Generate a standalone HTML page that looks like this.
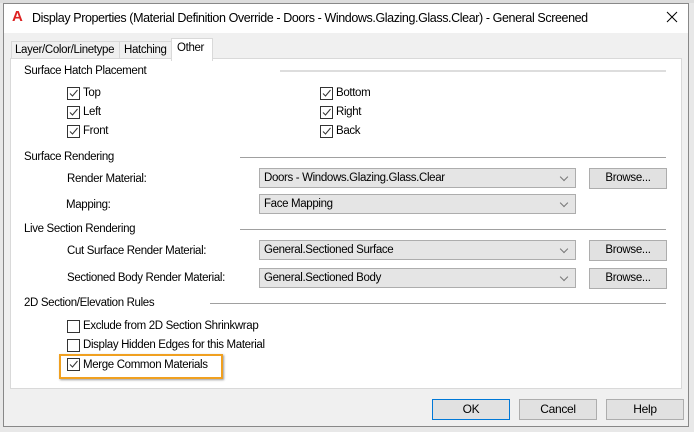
<!DOCTYPE html>
<html><head><style>
body{margin:0;width:694px;height:432px;overflow:hidden;background:#e8e8e8;font-family:"Liberation Sans",sans-serif;font-size:11.5px;color:#000;position:relative}
.a{position:absolute;white-space:nowrap}
.lbl{letter-spacing:-0.35px}
.cb{position:absolute;width:11px;height:11px;border:1px solid #333;background:#fff}
.cb svg{position:absolute;left:0;top:0}
.line{position:absolute;height:1px;background:#a0a0a0}
.combo{position:absolute;height:20px;width:317px;background:#e5e5e5;border:1px solid #adadad;box-sizing:border-box;padding:3px 0 0 4px;letter-spacing:-0.35px}
.combo:after{content:"";position:absolute;right:8px;top:5px;width:5px;height:5px;border-right:1px solid #777;border-bottom:1px solid #777;transform:rotate(45deg)}
.btn{position:absolute;height:21px;background:#e1e1e1;border:1px solid #adadad;box-sizing:border-box;text-align:center;line-height:19px;letter-spacing:-0.3px}
</style></head><body>
<div class="a" style="left:0;top:0;width:694px;height:3px;background:#ddd"></div>
<div class="a" style="left:3px;top:3px;width:686px;height:424px;background:#f0f0f0;border:1px solid #888;box-sizing:border-box"></div>
<div class="a" style="left:4px;top:4px;width:684px;height:29px;background:#fff"></div>
<div class="a" style="left:12px;top:8px;font-weight:bold;color:#d22;font-size:15px">A</div>
<div class="a" style="left:32px;top:11px;font-size:12.5px;letter-spacing:-0.4px">Display Properties (Material Definition Override - Doors - Windows.Glazing.Glass.Clear) - General Screened</div>
<svg class="a" style="left:666px;top:11px" width="12" height="12"><path d="M1 1L11 11M11 1L1 11" stroke="#000" stroke-width="1"/></svg>
<div class="a" style="left:11px;top:41px;width:108px;height:17px;border:1px solid #d9d9d9;border-bottom:none;background:#f0f0f0"></div>
<div class="a lbl" style="left:15px;top:44px">Layer/Color/Linetype</div>
<div class="a" style="left:119px;top:41px;width:52px;height:17px;border:1px solid #d9d9d9;border-bottom:none;background:#f0f0f0"></div>
<div class="a lbl" style="left:124px;top:44px">Hatching</div>
<div class="a" style="left:10px;top:58px;width:672px;height:331px;background:#fff;border:1px solid #d9d9d9;box-sizing:border-box"></div>
<div class="a" style="left:171px;top:38px;width:40px;height:22px;border:1px solid #d9d9d9;border-bottom:none;background:#fff"></div>
<div class="a lbl" style="left:177px;top:42px">Other</div>
<div class="a lbl" style="left:24px;top:65px">Surface Hatch Placement</div>
<div class="line" style="left:280px;top:70px;width:386px;height:2px;background:#ddd"></div>
<div class="cb" style="left:67px;top:87px"><svg width="11" height="11"><path d="M2 5.5L4.5 8L9.5 2" stroke="#333" fill="none"/></svg></div>
<div class="a lbl" style="left:83px;top:87px">Top</div>
<div class="cb" style="left:67px;top:106px"><svg width="11" height="11"><path d="M2 5.5L4.5 8L9.5 2" stroke="#333" fill="none"/></svg></div>
<div class="a lbl" style="left:83px;top:106px">Left</div>
<div class="cb" style="left:67px;top:125px"><svg width="11" height="11"><path d="M2 5.5L4.5 8L9.5 2" stroke="#333" fill="none"/></svg></div>
<div class="a lbl" style="left:83px;top:125px">Front</div>
<div class="cb" style="left:320px;top:87px"><svg width="11" height="11"><path d="M2 5.5L4.5 8L9.5 2" stroke="#333" fill="none"/></svg></div>
<div class="a lbl" style="left:336px;top:87px">Bottom</div>
<div class="cb" style="left:320px;top:106px"><svg width="11" height="11"><path d="M2 5.5L4.5 8L9.5 2" stroke="#333" fill="none"/></svg></div>
<div class="a lbl" style="left:336px;top:106px">Right</div>
<div class="cb" style="left:320px;top:125px"><svg width="11" height="11"><path d="M2 5.5L4.5 8L9.5 2" stroke="#333" fill="none"/></svg></div>
<div class="a lbl" style="left:336px;top:125px">Back</div>

<div class="a lbl" style="left:24px;top:151px">Surface Rendering</div>
<div class="line" style="left:240px;top:157px;width:426px"></div>
<div class="a lbl" style="left:67px;top:173px">Render Material:</div>
<div class="combo" style="left:259px;top:168px">Doors - Windows.Glazing.Glass.Clear</div>
<div class="btn" style="left:589px;top:168px;width:78px">Browse...</div>
<div class="a lbl" style="left:66px;top:199px">Mapping:</div>
<div class="combo" style="left:259px;top:194px">Face Mapping</div>

<div class="a lbl" style="left:24px;top:223px">Live Section Rendering</div>
<div class="line" style="left:240px;top:229px;width:426px"></div>
<div class="a lbl" style="left:67px;top:245px">Cut Surface Render Material:</div>
<div class="combo" style="left:259px;top:240px">General.Sectioned Surface</div>
<div class="btn" style="left:589px;top:240px;width:78px">Browse...</div>
<div class="a lbl" style="left:67px;top:272px">Sectioned Body Render Material:</div>
<div class="combo" style="left:259px;top:268px">General.Sectioned Body</div>
<div class="btn" style="left:589px;top:268px;width:78px">Browse...</div>

<div class="a lbl" style="left:24px;top:297px">2D Section/Elevation Rules</div>
<div class="line" style="left:210px;top:303px;width:456px"></div>
<div class="cb" style="left:67px;top:320px"></div>
<div class="a lbl" style="left:83px;top:320px">Exclude from 2D Section Shrinkwrap</div>
<div class="cb" style="left:67px;top:339px"></div>
<div class="a lbl" style="left:83px;top:339px">Display Hidden Edges for this Material</div>
<div class="a" style="left:59px;top:354px;width:160px;height:21px;border:2px solid #f0a020;box-shadow:1px 1px 2px #999"></div>
<div class="cb" style="left:67px;top:358px"><svg width="11" height="11"><path d="M2 5.5L4.5 8L9.5 2" stroke="#333" fill="none"/></svg></div>
<div class="a lbl" style="left:83px;top:359px">Merge Common Materials</div>

<div class="btn" style="left:432px;top:399px;width:78px;border:1px solid #0078d7;font-size:12px">OK</div>
<div class="btn" style="left:519px;top:399px;width:78px;font-size:12px">Cancel</div>
<div class="btn" style="left:606px;top:399px;width:78px;font-size:12px">Help</div>
</body></html>
